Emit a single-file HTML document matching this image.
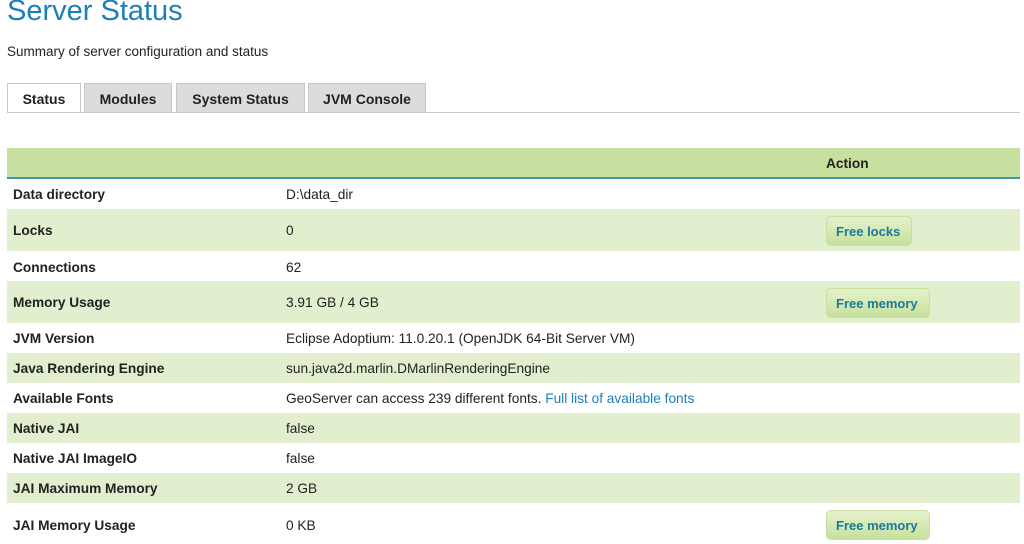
<!DOCTYPE html>
<html><head><style>
body{margin:0;width:1024px;height:544px;overflow:hidden;background:#fff;font-family:"Liberation Sans",sans-serif;color:#222;position:relative}
.a{position:absolute}
h1{position:absolute;left:7px;top:-5px;margin:0;font-weight:normal;font-size:29px;color:#1d7fb8}
.sub{left:7px;top:44px;font-size:13.5px;color:#222}
.tab{position:absolute;top:83px;height:29px;line-height:31px;text-align:center;font-weight:bold;font-size:14px;background:#dcdcdc;border:1px solid #c8c8c8;border-bottom:none;box-sizing:border-box;color:#222}
.line{left:7px;right:4px;top:112px;height:1px;background:#c8c8c8}
.row{position:absolute;left:7px;width:1013px;font-size:13.7px}
.g{background:#e2efcf}
.lab{position:absolute;left:6px;font-weight:bold;margin-top:1px}
.val{position:absolute;left:279px;margin-top:1px}
.btn{position:absolute;left:819px;height:30px;line-height:29px;padding:0 11px 0 9px;border-radius:5px;background:linear-gradient(#e4f2cc,#c6e19c);border:1px solid #c7de9f;box-sizing:border-box;color:#1b7a9c;font-weight:bold;font-size:13px}
a{color:#1d7fb8;text-decoration:none}
</style></head><body>
<h1>Server Status</h1>
<div class="a sub">Summary of server configuration and status</div>
<div class="tab" style="left:7px;width:74px;background:#fff;height:30px">Status</div>
<div class="tab" style="left:84px;width:88px">Modules</div>
<div class="tab" style="left:176px;width:129px">System Status</div>
<div class="tab" style="left:308px;width:118px">JVM Console</div>
<div class="a line"></div>
<div class="row" style="top:148px;height:29px;background:#c8e09f;border-bottom:2px solid #3a98a8"><span class="lab" style="left:819px;top:7px">Action</span></div>
<div class="row" style="top:179px;height:30px"><span class="lab" style="top:7px">Data directory</span><span class="val" style="top:7px">D:\data_dir</span></div>
<div class="row g" style="top:209px;height:42px"><span class="lab" style="top:13px">Locks</span><span class="val" style="top:13px">0</span><span class="btn" style="top:7px">Free locks</span></div>
<div class="row" style="top:251px;height:30px"><span class="lab" style="top:8px">Connections</span><span class="val" style="top:8px">62</span></div>
<div class="row g" style="top:281px;height:42px"><span class="lab" style="top:13px">Memory Usage</span><span class="val" style="top:13px">3.91 GB / 4 GB</span><span class="btn" style="top:7px">Free memory</span></div>
<div class="row" style="top:323px;height:30px"><span class="lab" style="top:7px">JVM Version</span><span class="val" style="top:7px">Eclipse Adoptium: 11.0.20.1 (OpenJDK 64-Bit Server VM)</span></div>
<div class="row g" style="top:353px;height:30px"><span class="lab" style="top:7px">Java Rendering Engine</span><span class="val" style="top:7px">sun.java2d.marlin.DMarlinRenderingEngine</span></div>
<div class="row" style="top:383px;height:30px"><span class="lab" style="top:7px">Available Fonts</span><span class="val" style="top:7px">GeoServer can access 239 different fonts. <a>Full list of available fonts</a></span></div>
<div class="row g" style="top:413px;height:30px"><span class="lab" style="top:7px">Native JAI</span><span class="val" style="top:7px">false</span></div>
<div class="row" style="top:443px;height:30px"><span class="lab" style="top:7px">Native JAI ImageIO</span><span class="val" style="top:7px">false</span></div>
<div class="row g" style="top:473px;height:30px"><span class="lab" style="top:7px">JAI Maximum Memory</span><span class="val" style="top:7px">2 GB</span></div>
<div class="row" style="top:503px;height:41px"><span class="lab" style="top:14px">JAI Memory Usage</span><span class="val" style="top:14px">0 KB</span><span class="btn" style="top:7px">Free memory</span></div>
</body></html>
